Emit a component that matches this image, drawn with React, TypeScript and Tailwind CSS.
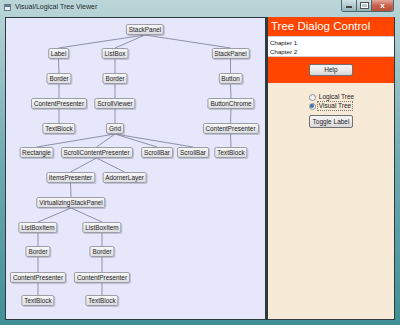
import React from "react";

type N = { id: string; label: string; cx: number; top: number; parent?: string };

const OX = 6;
const OY = 18;
const H = 11;

const nodes: N[] = [
  { id: "sp", label: "StackPanel", cx: 145, top: 24 },
  { id: "label", label: "Label", cx: 58.5, top: 48, parent: "sp" },
  { id: "lb", label: "ListBox", cx: 115, top: 48, parent: "sp" },
  { id: "sp2", label: "StackPanel", cx: 230.5, top: 48, parent: "sp" },
  { id: "b1", label: "Border", cx: 59, top: 73, parent: "label" },
  { id: "b2", label: "Border", cx: 115, top: 73, parent: "lb" },
  { id: "btn", label: "Button", cx: 230.5, top: 73, parent: "sp2" },
  { id: "cp1", label: "ContentPresenter", cx: 59, top: 98, parent: "b1" },
  { id: "sv", label: "ScrollViewer", cx: 115, top: 98, parent: "b2" },
  { id: "bc", label: "ButtonChrome", cx: 231, top: 98, parent: "btn" },
  { id: "tb1", label: "TextBlock", cx: 59, top: 123, parent: "cp1" },
  { id: "grid", label: "Grid", cx: 115, top: 123, parent: "sv" },
  { id: "cp2", label: "ContentPresenter", cx: 230.5, top: 123, parent: "bc" },
  { id: "rect", label: "Rectangle", cx: 36.5, top: 147, parent: "grid" },
  { id: "scp", label: "ScrollContentPresenter", cx: 96.5, top: 147, parent: "grid" },
  { id: "sb1", label: "ScrollBar", cx: 157, top: 147, parent: "grid" },
  { id: "sb2", label: "ScrollBar", cx: 193, top: 147, parent: "grid" },
  { id: "tb2", label: "TextBlock", cx: 231, top: 147, parent: "cp2" },
  { id: "ip", label: "ItemsPresenter", cx: 70.5, top: 172, parent: "scp" },
  { id: "al", label: "AdornerLayer", cx: 124.5, top: 172, parent: "scp" },
  { id: "vsp", label: "VirtualizingStackPanel", cx: 71, top: 197, parent: "ip" },
  { id: "lbi1", label: "ListBoxItem", cx: 38, top: 222, parent: "vsp" },
  { id: "lbi2", label: "ListBoxItem", cx: 102, top: 222, parent: "vsp" },
  { id: "b3", label: "Border", cx: 38, top: 246, parent: "lbi1" },
  { id: "b4", label: "Border", cx: 102, top: 246, parent: "lbi2" },
  { id: "cp3", label: "ContentPresenter", cx: 38, top: 272, parent: "b3" },
  { id: "cp4", label: "ContentPresenter", cx: 102, top: 272, parent: "b4" },
  { id: "tb3", label: "TextBlock", cx: 38, top: 295, parent: "cp3" },
  { id: "tb4", label: "TextBlock", cx: 102, top: 295, parent: "cp4" },
];

const byId: Record<string, N> = Object.fromEntries(nodes.map((n) => [n.id, n]));

function TreeCanvas() {
  return (
    <div className="relative flex-1 bg-[#e6e7fb] border border-[#2f3a40]">
      <svg className="absolute inset-0 w-full h-full" aria-hidden>
        {nodes
          .filter((n) => n.parent)
          .map((n) => {
            const p = byId[n.parent!];
            return (
              <line
                key={n.id}
                x1={p.cx - OX}
                y1={p.top - OY + H}
                x2={n.cx - OX}
                y2={n.top - OY}
                stroke="#8d91a8"
                strokeWidth={1}
              />
            );
          })}
      </svg>
      {nodes.map((n) => (
        <div
          key={n.id}
          className="absolute -translate-x-1/2 h-[11px] px-[2px] rounded-[2px] border border-[#9b9ea6] bg-gradient-to-b from-[#f7f7f7] to-[#dcdde1] text-[6.4px] leading-[9px] text-[#1e1e1e] whitespace-nowrap shadow-[1px_1px_0_rgba(120,120,140,0.35)]"
          style={{ left: n.cx - OX, top: n.top - OY }}
        >
          {n.label}
        </div>
      ))}
    </div>
  );
}

function Radio({ label, checked, focus }: { label: string; checked?: boolean; focus?: boolean }) {
  return (
    <div className="flex items-center gap-[2px]">
      <span className="w-[7px] h-[7px] rounded-full border border-[#8a8f99] bg-gradient-to-b from-[#e6e6e6] to-[#ffffff] flex items-center justify-center">
        {checked && <span className="w-[4px] h-[4px] rounded-full bg-[#3f6fa8]" />}
      </span>
      <span
        className={`text-[6.5px] leading-[8px] text-[#222] px-[1px] ${focus ? "outline outline-1 outline-dotted outline-[#777]" : ""}`}
      >
        {label}
      </span>
    </div>
  );
}

function Button({ label, className }: { label: string; className?: string }) {
  return (
    <div
      className={`w-[44px] flex items-center justify-center rounded-[2px] border border-[#707070] bg-gradient-to-b from-[#f4f4f4] via-[#ebebeb] to-[#d6d6d6] text-[6.5px] text-[#1a1a1a] ${className ?? ""}`}
    >
      {label}
    </div>
  );
}

export default function App() {
  return (
    <div
      className="w-[400px] h-[325px] flex flex-col bg-gradient-to-b from-[#bcd6d8] via-[#6eaab0] to-[#3f9096] overflow-hidden"
      style={{ fontFamily: '"Liberation Sans", Arial, sans-serif' }}
    >
      {/* title bar */}
      <div className="h-[17px] flex items-start">
        <div className="flex items-center h-[15px] pl-[4px] gap-[4px]">
          <div className="w-[7px] h-[7px] border border-[#6a7a80] bg-[#e8eef0] flex flex-col">
            <div className="h-[2px] bg-[#5a7c96]" />
          </div>
          <span className="text-[7px] text-[#1c2a30]">Visual/Logical Tree Viewer</span>
        </div>
        <div className="ml-auto mr-[6px] flex h-[12px] rounded-b-[3px] overflow-hidden border border-t-0 border-[#4a6a70]">
          <div className="w-[15px] bg-gradient-to-b from-[#d2e2e5] to-[#94b4ba] flex items-center justify-center border-r border-[#4a6a70]">
            <div className="w-[6px] h-[2px] bg-white border border-[#444] mt-[3px]" />
          </div>
          <div className="w-[15px] bg-gradient-to-b from-[#d2e2e5] to-[#94b4ba] flex items-center justify-center border-r border-[#4a6a70]">
            <div className="w-[7px] h-[5px] border border-white outline outline-1 outline-[#555]" />
          </div>
          <div className="w-[21px] bg-gradient-to-b from-[#e3a89a] via-[#c9604c] to-[#b8503a] flex items-center justify-center text-white text-[8px] font-bold leading-none">
            x
          </div>
        </div>
      </div>

      {/* client */}
      <div className="flex flex-1 px-[5px] pb-[5px]">
        <TreeCanvas />
        <div className="w-[129px] flex flex-col border-[2px] border-l-[2px] border-r-[1px] border-t-0 border-b-[1px] border-[#2f3a40] bg-[#f7ebd8]">
          <div className="bg-[#ff4500] flex flex-col">
            <div className="h-[19px] flex items-center pl-[3px] text-[11.5px] text-white leading-none">
              Tree Dialog Control
            </div>
            <div className="bg-white h-[21px] flex flex-col justify-center pl-[2px] text-[6.2px] leading-[9px] text-[#111] border-y border-[#d0d0d0]">
              <div>Chapter 1</div>
              <div>Chapter 2</div>
            </div>
            <div className="h-[26px] flex items-center justify-center">
              <Button label="Help" className="h-[12px]" />
            </div>
          </div>
          <div className="flex flex-col items-center pt-[10px] gap-[1px]">
            <div className="flex flex-col gap-[1px] ml-[2px]">
              <Radio label="Logical Tree" />
              <Radio label="Visual Tree" checked focus />
            </div>
            <Button label="Toggle Label" className="h-[13px] mt-[4px]" />
          </div>
        </div>
      </div>
    </div>
  );
}
